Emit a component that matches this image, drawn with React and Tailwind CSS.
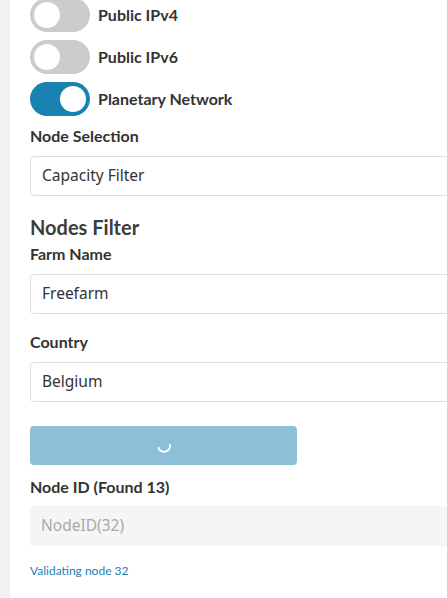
import React from "react";

function Toggle({ on, label }) {
  return (
    <div className="flex items-center h-[34px]">
      <div
        className={
          "relative w-[60px] h-[34px] rounded-[34px] shrink-0 " +
          (on ? "bg-[#1a82b0]" : "bg-[#cccccc]")
        }
      >
        <div
          className={
            "absolute top-[4px] w-[26px] h-[26px] rounded-full bg-white " +
            (on ? "left-[30px]" : "left-[4px]")
          }
        />
      </div>
      <span className="ml-[8px] text-[16px] font-bold text-[#333333] font-['Lato',sans-serif]">
        {label}
      </span>
    </div>
  );
}

function Label({ children, className = "" }) {
  return (
    <div
      className={
        "h-[20px] leading-[20px] text-[16px] font-bold text-[#333333] font-['Lato',sans-serif] " +
        className
      }
    >
      {children}
    </div>
  );
}

function Field({ value, className = "" }) {
  return (
    <div
      className={
        "w-[440px] h-[40px] flex items-center px-[11px] rounded-[4px] border border-[#dddddd] bg-white text-[15.5px] text-[#333333] font-['Noto_Sans',sans-serif] " +
        className
      }
    >
      {value}
    </div>
  );
}

export default function App() {
  return (
    <div className="w-[447px] h-[598px] overflow-hidden flex bg-white">
      <div className="w-[10px] shrink-0 bg-[#f2f2f2]" />
      <div className="flex flex-col pl-[20px] -mt-[2px]">
        <div className="flex flex-col gap-[8px]">
          <Toggle label="Public IPv4" />
          <Toggle label="Public IPv6" />
          <Toggle on label="Planetary Network" />
        </div>
        <Label className="mt-[10px]">Node Selection</Label>
        <Field value="Capacity Filter" className="mt-[10px]" />
        <div className="mt-[17px] h-[28px] leading-[28px] text-[20px] font-bold text-[#3c3c3c] font-['Lato',sans-serif]">
          Nodes Filter
        </div>
        <Label className="mt-[3px]">Farm Name</Label>
        <Field value="Freefarm" className="mt-[10px]" />
        <Label className="mt-[18px]">Country</Label>
        <Field value="Belgium" className="mt-[10px]" />
        <div className="mt-[24px] w-[267px] h-[39px] rounded-[4px] bg-[#8cc0d8] flex items-center justify-center">
          <svg width="16" height="16" viewBox="0 0 16 16" className="mt-[1px]">
            <path
              d="M2.5 10 A6 6 0 0 0 14 7"
              fill="none"
              stroke="white"
              strokeWidth="2"
              strokeLinecap="round"
            />
          </svg>
        </div>
        <Label className="mt-[12px]">Node ID (Found 13)</Label>
        <div className="mt-[9px] w-[440px] h-[40px] flex items-center px-[11px] rounded-[4px] bg-[#f5f5f5] text-[15.5px] text-[#aaaaaa] font-['Noto_Sans',sans-serif]">
          NodeID(32)
        </div>
        <div className="mt-[17px] h-[16px] leading-[16px] text-[12px] text-[#1a82b0] font-['Lato',sans-serif]">
          Validating node 32
        </div>
      </div>
    </div>
  );
}
